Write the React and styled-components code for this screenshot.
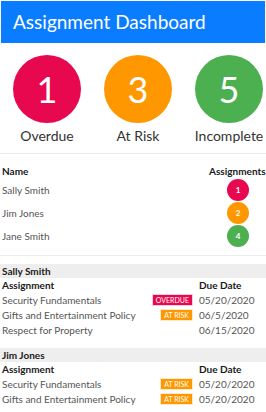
import styled, { createGlobalStyle } from "styled-components";

const GlobalStyle = createGlobalStyle`
  body {
    margin: 0;
    font-family: Lato, "Open Sans", sans-serif;
    background: #fff;
  }
  * { box-sizing: border-box; }
`;

const summary = [
  { count: 1, label: "Overdue", color: "#e8084f" },
  { count: 3, label: "At Risk", color: "#ff9800" },
  { count: 5, label: "Incomplete", color: "#4caf50" },
];

const people = [
  { name: "Sally Smith", count: 1, color: "#e8084f" },
  { name: "Jim Jones", count: 2, color: "#ff9800" },
  { name: "Jane Smith", count: 4, color: "#4caf50" },
];

const details = [
  {
    name: "Sally Smith",
    rows: [
      { title: "Security Fundamentals", status: "OVERDUE", due: "05/20/2020" },
      { title: "Gifts and Entertainment Policy", status: "AT RISK", due: "06/5/2020" },
      { title: "Respect for Property", status: null, due: "06/15/2020" },
    ],
  },
  {
    name: "Jim Jones",
    rows: [
      { title: "Security Fundamentals", status: "AT RISK", due: "05/20/2020" },
      { title: "Gifts and Entertainment Policy", status: "AT RISK", due: "05/20/2020" },
    ],
  },
];

function App() {
  return (
    <Page>
      <GlobalStyle />
      <Header>Assignment Dashboard</Header>
      <Summary>
        {summary.map((s) => (
          <Stat key={s.label}>
            <BigCircle $color={s.color}>{s.count}</BigCircle>
            <StatLabel>{s.label}</StatLabel>
          </Stat>
        ))}
      </Summary>
      <Divider $gap={8} />
      <PeopleTable>
        <PeopleRow>
          <HeadCell>Name</HeadCell>
          <HeadCell $right>Assignments</HeadCell>
        </PeopleRow>
        {people.map((p) => (
          <PeopleRow key={p.name} $body>
            <Cell>{p.name}</Cell>
            <BadgeCell>
              <SmallCircle $color={p.color}>{p.count}</SmallCircle>
            </BadgeCell>
          </PeopleRow>
        ))}
      </PeopleTable>
      <Divider />
      {details.map((d) => (
        <Section key={d.name}>
          <SectionTitle>{d.name}</SectionTitle>
          <DetailRow $head>
            <HeadCell>Assignment</HeadCell>
            <TagCell />
            <HeadCell>Due Date</HeadCell>
          </DetailRow>
          {d.rows.map((r) => (
            <DetailRow key={r.title}>
              <Cell>{r.title}</Cell>
              <TagCell>
                {r.status && (
                  <Tag $color={r.status === "OVERDUE" ? "#e8084f" : "#ff9800"}>
                    {r.status}
                  </Tag>
                )}
              </TagCell>
              <Cell>{r.due}</Cell>
            </DetailRow>
          ))}
        </Section>
      ))}
    </Page>
  );
}

export default App;

const Page = styled.div`
  width: 266px;
  padding-top: 1px;
`;

const Header = styled.div`
  margin: 0 1px;
  height: 42px;
  background: #0a7cff;
  color: #fff;
  font-size: 19px;
  line-height: 42px;
  padding-left: 12px;
`;

const Summary = styled.div`
  display: flex;
  gap: 23px;
  padding-left: 13px;
  margin-top: 12px;
`;

const Stat = styled.div`
  width: 68px;
  display: flex;
  flex-direction: column;
  align-items: center;
`;

const BigCircle = styled.div`
  width: 68px;
  height: 68px;
  border-radius: 50%;
  background: ${(p) => p.$color};
  color: #fff;
  font-size: 36px;
  display: flex;
  align-items: center;
  justify-content: center;
`;

const StatLabel = styled.div`
  margin-top: 4px;
  font-size: 14px;
  color: #333;
  white-space: nowrap;
  line-height: 18px;
`;

const Divider = styled.div`
  height: 1px;
  background: #ececec;
  margin-top: ${(p) => p.$gap || 0}px;
`;

const PeopleTable = styled.div`
  padding: 10px 1px 8px 2px;
`;

const PeopleRow = styled.div`
  display: grid;
  grid-template-columns: 1fr 56px;
  align-items: center;
  height: ${(p) => (p.$body ? "23px" : "14px")};
`;

const HeadCell = styled.div`
  font-size: 10px;
  font-weight: 700;
  color: #1a1a1a;
  text-align: ${(p) => (p.$right ? "right" : "left")};
  white-space: nowrap;
`;

const Cell = styled.div`
  font-size: 10px;
  color: #555;
  white-space: nowrap;
`;

const BadgeCell = styled.div`
  display: flex;
  justify-content: center;
  padding-left: 2px;
`;

const SmallCircle = styled.div`
  width: 22px;
  height: 22px;
  border-radius: 50%;
  background: ${(p) => p.$color};
  color: #fff;
  font-size: 8px;
  font-weight: 700;
  display: flex;
  align-items: center;
  justify-content: center;
`;

const Section = styled.div`
  margin-top: 8px;
  margin-bottom: 11px;
`;

const SectionTitle = styled.div`
  background: #eee;
  height: 14px;
  line-height: 14px;
  padding-left: 2px;
  font-size: 10px;
  font-weight: 700;
  color: #1a1a1a;
`;

const DetailRow = styled.div`
  display: grid;
  grid-template-columns: 1fr auto 67px;
  align-items: center;
  height: ${(p) => (p.$head ? "14px" : "15px")};
  padding-left: 2px;
`;

const TagCell = styled.span`
  display: flex;
  justify-content: flex-end;
  padding-right: 7px;
`;

const Tag = styled.span`
  background: ${(p) => p.$color};
  color: #fff;
  font-size: 7px;
  line-height: 10px;
  padding: 0 3px;
  outline: 1px solid ${(p) => p.$color}33;
`;
